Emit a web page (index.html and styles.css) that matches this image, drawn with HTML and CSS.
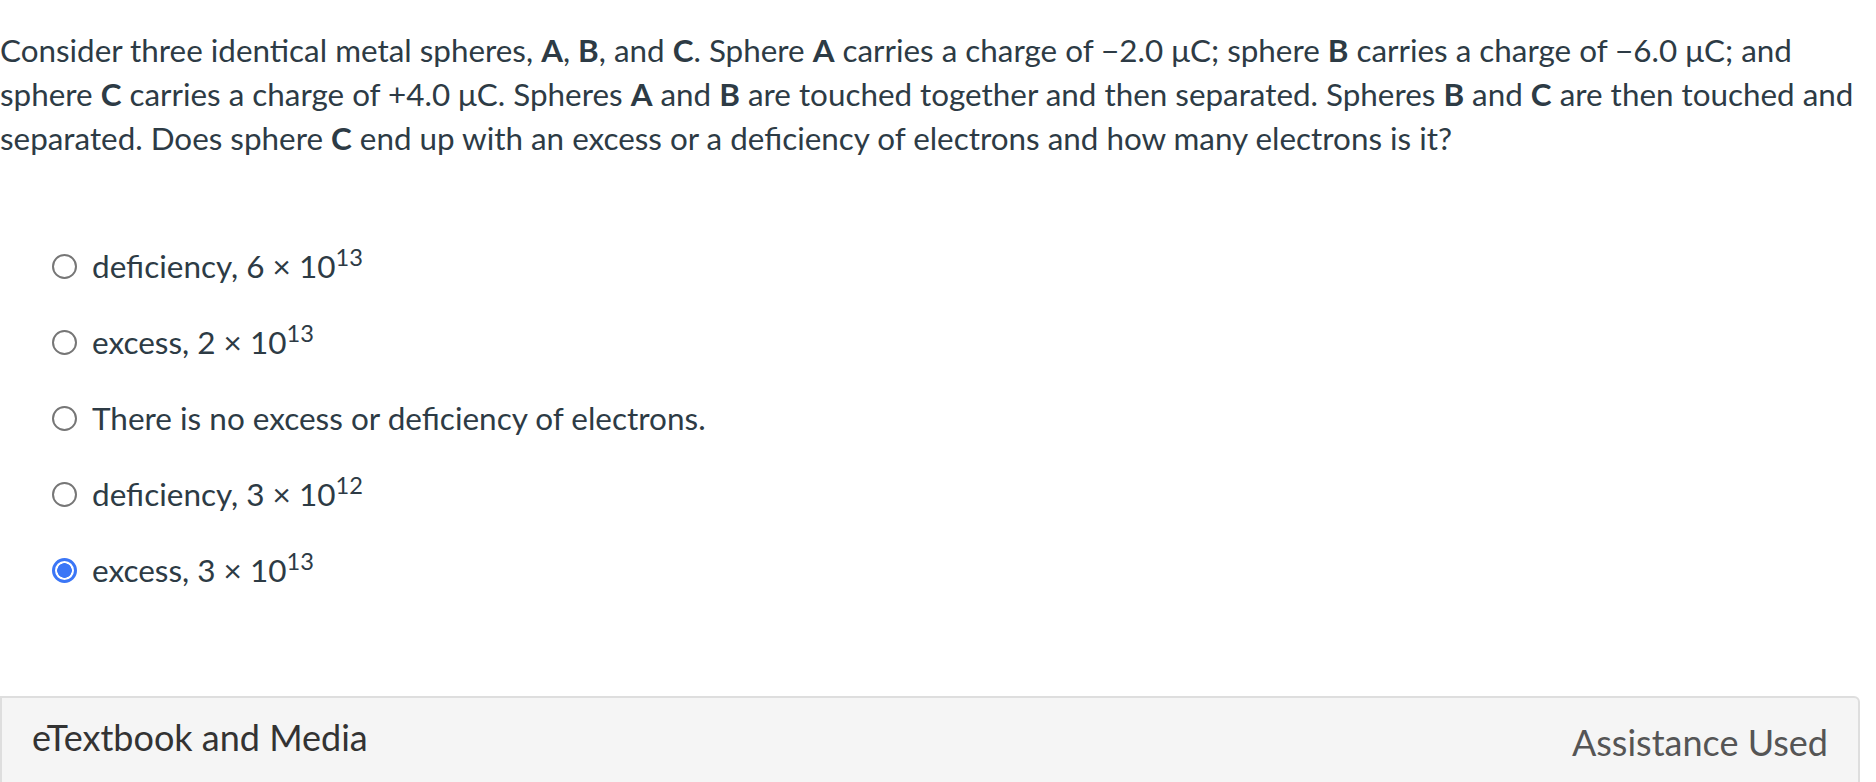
FILE: index.html
```html
<!DOCTYPE html>
<html>
<head>
<meta charset="utf-8">
<link rel="stylesheet" href="styles.css">
</head>
<body>
<div class="page">
  <p class="question">Consider three identical metal spheres, <b>A</b>, <b>B</b>, and <b>C</b>. Sphere <b>A</b> carries a charge of −2.0 μC; sphere <b>B</b> carries a charge of −6.0 μC; and sphere <b>C</b> carries a charge of +4.0 μC. Spheres <b>A</b> and <b>B</b> are touched together and then separated. Spheres <b>B</b> and <b>C</b> are then touched and separated. Does sphere <b>C</b> end up with an excess or a deficiency of electrons and how many electrons is it?</p>
  <ul class="options">
    <li class="option"><span class="radio"></span><span class="label">deficiency, 6 × 10<sup>13</sup></span></li>
    <li class="option"><span class="radio"></span><span class="label">excess, 2 × 10<sup>13</sup></span></li>
    <li class="option"><span class="radio"></span><span class="label">There is no excess or deficiency of electrons.</span></li>
    <li class="option"><span class="radio"></span><span class="label">deficiency, 3 × 10<sup>12</sup></span></li>
    <li class="option"><span class="radio checked"></span><span class="label">excess, 3 × 10<sup>13</sup></span></li>
  </ul>
  <div class="footer">
    <span class="footer-title">eTextbook and Media</span>
    <span class="footer-status">Assistance Used</span>
  </div>
</div>
</body>
</html>
```

FILE: styles.css
```css
html, body {
  margin: 0;
  padding: 0;
  background: #ffffff;
}

body {
  font-family: Lato, "Liberation Sans", sans-serif;
  color: #2d3b45;
  overflow: hidden;
}

.page {
  width: 1860px;
}

.question {
  margin: 0;
  width: 1870px;
  padding-top: 28px;
  font-size: 31.4px;
  line-height: 44px;
}

.question b {
  font-weight: 700;
}

.options {
  list-style: none;
  margin: 0;
  padding: 0 0 0 52px;
  margin-top: 68px;
  display: flex;
  flex-direction: column;
}

.option {
  display: flex;
  align-items: center;
  height: 76px;
  font-size: 31.5px;
}

.radio {
  box-sizing: border-box;
  width: 25px;
  height: 25px;
  border: 2px solid #767676;
  border-radius: 50%;
  margin-right: 15px;
  flex: none;
  background: #fff;
}

.radio.checked {
  border: 3px solid #3b76f6;
  background: radial-gradient(circle, #3b76f6 0 7px, #ffffff 7.6px);
}

.label sup {
  font-size: 0.75em;
  line-height: 0;
  vertical-align: 0.5em;
}

.footer {
  box-sizing: border-box;
  margin-top: 88px;
  height: 120px;
  background: #f5f5f5;
  border: 2px solid #dedede;
  border-radius: 0 6px 0 0;
  display: flex;
  justify-content: space-between;
  align-items: flex-start;
  padding: 0 30px 0 30px;
}

.footer-title {
  font-size: 36px;
  color: #333333;
  margin-top: 17px;
}

.footer-status {
  font-size: 36px;
  color: #555555;
  margin-top: 22px;
}
```
